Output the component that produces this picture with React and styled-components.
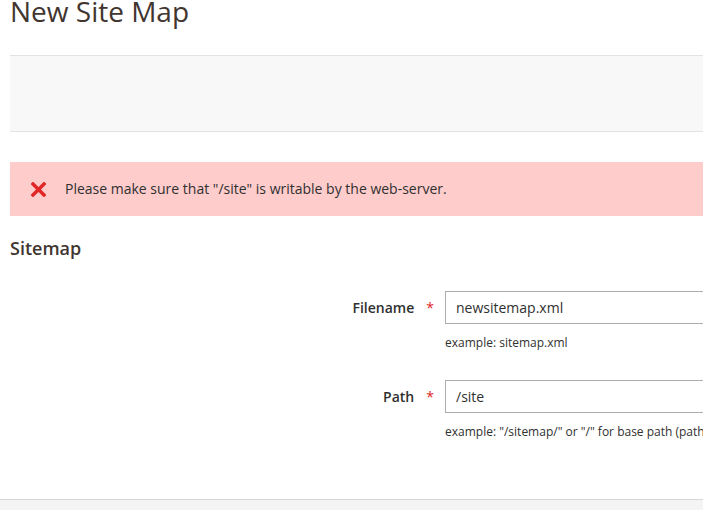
import styled, { createGlobalStyle } from "styled-components";

const GlobalStyle = createGlobalStyle`
  body {
    margin: 0;
    background: #fff;
    font-family: "Open Sans", "Liberation Sans", sans-serif;
    color: #303030;
    overflow: hidden;
  }
`;

const Page = styled.div`
  width: 703px;
  height: 510px;
  overflow: hidden;
  display: flex;
  flex-direction: column;
`;

const Main = styled.div`
  padding-left: 10px;
  flex: 1;
`;

const Title = styled.h1`
  margin: -3px 0 0 0;
  font-size: 28px;
  line-height: 28px;
  font-weight: 400;
  color: #41362f;
  white-space: nowrap;
`;

const ActionsBar = styled.div`
  margin-top: 30px;
  height: 75px;
  background: #f8f8f8;
  border-top: 1px solid #e3e3e3;
  border-bottom: 1px solid #e3e3e3;
`;

const Message = styled.div`
  margin-top: 30px;
  height: 54px;
  box-sizing: border-box;
  background: #ffcccc;
  display: flex;
  align-items: center;
  gap: 19px;
  padding-left: 21px;
  font-size: 14px;
  line-height: 20px;
  color: #303030;
  white-space: nowrap;
`;

const ErrorIcon = styled.svg`
  width: 15px;
  height: 15px;
  flex: none;
`;

const Legend = styled.h2`
  margin: 20px 0 0;
  font-size: 18px;
  line-height: 24px;
  font-weight: 600;
  color: #41362f;
`;

const Fields = styled.div`
  margin-top: 31px;
  display: flex;
  flex-direction: column;
  gap: 28px;
`;

const Field = styled.div`
  display: grid;
  grid-template-columns: 435px 1fr;
  row-gap: 10px;
`;

const Label = styled.label`
  display: flex;
  justify-content: flex-end;
  align-items: center;
  font-size: 14px;
  font-weight: 600;
  color: #303030;
`;

const Required = styled.span`
  color: #e22626;
  font-weight: 400;
  margin-left: 12px;
  margin-right: 11px;
`;

const Input = styled.input`
  width: 420px;
  height: 33px;
  box-sizing: border-box;
  border: 1px solid #adadad;
  border-radius: 0;
  padding: 0 10px;
  font-family: inherit;
  font-size: 14px;
  color: #303030;
  outline: none;
`;

const Note = styled.div`
  grid-column: 2;
  font-size: 12px;
  line-height: 18px;
  color: #303030;
  white-space: nowrap;
`;

const Footer = styled.div`
  height: 10px;
  background: #f4f4f4;
  border-top: 1px solid #d6d6d6;
`;

const fields = [
  { label: "Filename", value: "newsitemap.xml", note: "example: sitemap.xml" },
  {
    label: "Path",
    value: "/site",
    note: 'example: "/sitemap/" or "/" for base path (path must be writeable)',
  },
];

export default function App() {
  return (
    <Page>
      <GlobalStyle />
      <Main>
        <Title>New Site Map</Title>
        <ActionsBar />
        <Message>
          <ErrorIcon viewBox="0 0 15 15">
            <path
              d="M2 2 L13 13 M13 2 L2 13"
              stroke="#e22626"
              strokeWidth="3.4"
              strokeLinecap="square"
            />
          </ErrorIcon>
          Please make sure that "/site" is writable by the web-server.
        </Message>
        <Legend>Sitemap</Legend>
        <Fields>
          {fields.map((f) => (
            <Field key={f.label}>
              <Label>
                {f.label}
                <Required>*</Required>
              </Label>
              <Input defaultValue={f.value} />
              <Note>{f.note}</Note>
            </Field>
          ))}
        </Fields>
      </Main>
      <Footer />
    </Page>
  );
}
